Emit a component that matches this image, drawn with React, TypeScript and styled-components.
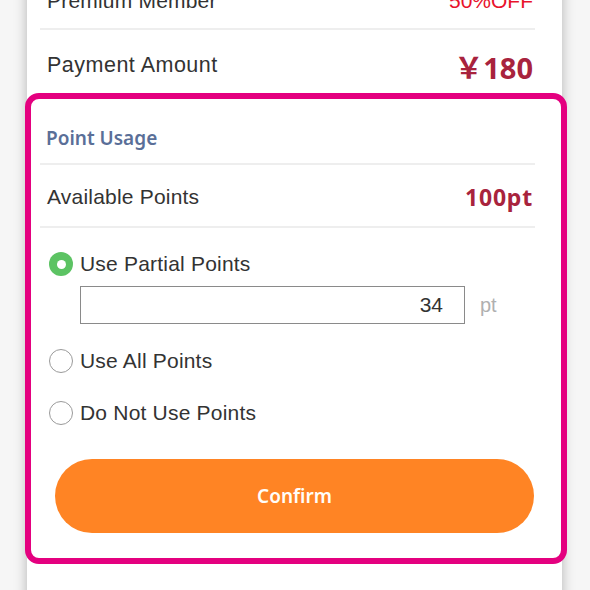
import React, { useState } from "react";
import styled, { createGlobalStyle } from "styled-components";

const GlobalStyle = createGlobalStyle`
  html, body {
    margin: 0;
    padding: 0;
    background: #f6f6f6;
    overflow: hidden;
  }
  * { box-sizing: border-box; }
`;

const Page = styled.div`
  width: 590px;
  height: 590px;
  padding: 0 28px 0 27px;
  overflow: hidden;
`;

const Card = styled.div`
  margin-top: -35px;
  min-height: 700px;
  background: #ffffff;
  box-shadow: 0 0 12px rgba(0, 0, 0, 0.28);
  display: flex;
  flex-direction: column;
`;

const InfoRow = styled.div<{ $height: number; $shift: number; $divider?: boolean }>`
  display: flex;
  align-items: center;
  justify-content: space-between;
  height: ${(p) => p.$height}px;
  margin: 0 27px 0 13px;
  padding: ${(p) => p.$shift}px 2px 0 7px;
  border-bottom: ${(p) => (p.$divider ? "2px solid #eeeeee" : "none")};
`;

const Label = styled.span<{ $large?: boolean }>`
  font-family: "Liberation Sans", Arial, sans-serif;
  font-size: ${(p) => (p.$large ? 21.5 : 21)}px;
  color: #333333;
  letter-spacing: ${(p) => (p.$large ? 0.5 : 0.2)}px;
`;

const Discount = styled.span`
  font-family: "Liberation Sans", Arial, sans-serif;
  font-size: 21px;
  color: #e8122c;
`;

const Amount = styled.span<{ $size: number; $spacing: number }>`
  font-family: "Noto Sans", "Noto Sans CJK JP", sans-serif;
  font-weight: 700;
  font-size: ${(p) => p.$size}px;
  color: #a8233d;
  letter-spacing: ${(p) => p.$spacing}px;
`;

const Highlight = styled.section`
  margin: 0 -5px 0 -2px;
  border: 6px solid #e4007f;
  border-radius: 14px;
  padding: 0 26px 25px 9px;
  background: #ffffff;
  display: flex;
  flex-direction: column;
`;

const SectionTitle = styled.h2`
  margin: 0;
  padding: 27px 0 13px 6px;
  font-family: "Noto Sans", sans-serif;
  font-weight: 600;
  font-size: 19px;
  line-height: 24px;
  color: #5a6f98;
  border-bottom: 2px solid #eeeeee;
`;

const PointsRow = styled.div`
  display: flex;
  align-items: center;
  justify-content: space-between;
  height: 63px;
  padding: 3px 2px 0 7px;
  border-bottom: 2px solid #eeeeee;
`;

const Options = styled.div`
  display: flex;
  flex-direction: column;
  padding-left: 9px;
  margin-top: 21px;
`;

const OptionRow = styled.label<{ $gap: number }>`
  display: flex;
  align-items: center;
  gap: 7px;
  height: 30px;
  margin-top: ${(p) => p.$gap}px;
  cursor: pointer;
`;

const RadioCircle = styled.span<{ $checked: boolean }>`
  width: 24px;
  height: 24px;
  border-radius: 50%;
  flex: none;
  display: flex;
  align-items: center;
  justify-content: center;
  background: ${(p) => (p.$checked ? "#5cc363" : "#ffffff")};
  border: ${(p) => (p.$checked ? "none" : "1.5px solid #9a9a9a")};
  &::after {
    content: "";
    width: 9px;
    height: 9px;
    border-radius: 50%;
    background: #ffffff;
    display: ${(p) => (p.$checked ? "block" : "none")};
  }
`;

const InputLine = styled.div`
  display: flex;
  align-items: center;
  gap: 15px;
  margin: 7px 0 0 31px;
`;

const PointInput = styled.input`
  width: 385px;
  height: 38px;
  border: 1.5px solid #8a8a8a;
  border-radius: 0;
  padding: 0 21px 0 8px;
  text-align: right;
  font-family: "Liberation Sans", Arial, sans-serif;
  font-size: 21px;
  color: #333333;
  outline: none;
`;

const Unit = styled.span`
  font-family: "Liberation Sans", Arial, sans-serif;
  font-size: 20px;
  color: #b0b0b0;
`;

const ConfirmButton = styled.button`
  margin: 31px 1px 0 15px;
  height: 74px;
  border: none;
  border-radius: 37px;
  background: #ff8424;
  color: #fffdf8;
  font-family: "Noto Sans", sans-serif;
  font-weight: 600;
  font-size: 19px;
  cursor: pointer;
`;

type Option = "partial" | "all" | "none";

export default function App() {
  const [option, setOption] = useState<Option>("partial");
  const [points, setPoints] = useState("34");

  const options: { key: Option; label: string; gap: number }[] = [
    { key: "partial", label: "Use Partial Points", gap: 0 },
    { key: "all", label: "Use All Points", gap: 22 },
    { key: "none", label: "Do Not Use Points", gap: 22 },
  ];

  return (
    <>
      <GlobalStyle />
      <Page>
        <Card>
          <InfoRow $height={65} $shift={8} $divider>
            <Label>Premium Member</Label>
            <Discount>50%OFF</Discount>
          </InfoRow>
          <InfoRow $height={63} $shift={8}>
            <Label $large>Payment Amount</Label>
            <Amount $size={29} $spacing={0}>
              ￥180
            </Amount>
          </InfoRow>
          <Highlight>
            <SectionTitle>Point Usage</SectionTitle>
            <PointsRow>
              <Label>Available Points</Label>
              <Amount $size={23} $spacing={0.8}>
                100pt
              </Amount>
            </PointsRow>
            <Options>
              {options.map((o) => (
                <React.Fragment key={o.key}>
                  <OptionRow $gap={o.gap} onClick={() => setOption(o.key)}>
                    <RadioCircle $checked={option === o.key} />
                    <Label>{o.label}</Label>
                  </OptionRow>
                  {o.key === "partial" && (
                    <InputLine>
                      <PointInput
                        value={points}
                        onChange={(e) => setPoints(e.target.value)}
                      />
                      <Unit>pt</Unit>
                    </InputLine>
                  )}
                </React.Fragment>
              ))}
            </Options>
            <ConfirmButton>Confirm</ConfirmButton>
          </Highlight>
        </Card>
      </Page>
    </>
  );
}
